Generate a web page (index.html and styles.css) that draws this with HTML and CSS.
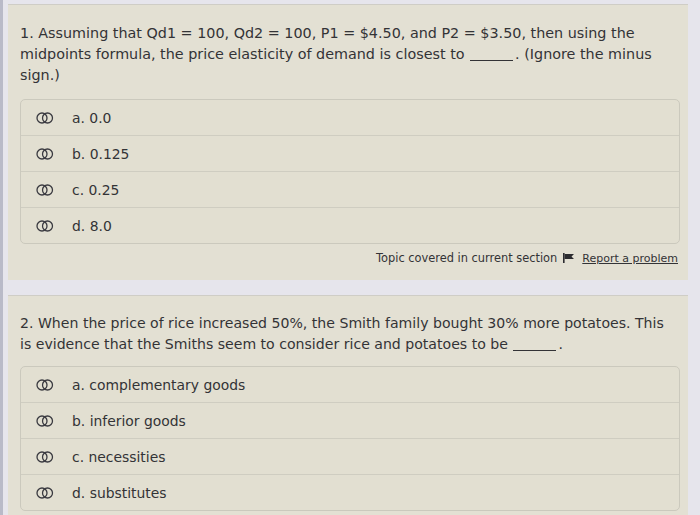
FILE: index.html
```html
<!DOCTYPE html>
<html>
<head>
<meta charset="utf-8">
<link rel="stylesheet" href="styles.css">
</head>
<body>
<div class="page">
  <section class="card card1">
    <p class="question">1. Assuming that Qd1 = 100, Qd2 = 100, P1 = $4.50, and P2 = $3.50, then using the midpoints formula, the price elasticity of demand is closest to <span class="blank"></span>. (Ignore the minus sign.)</p>
    <div class="options">
      <div class="opt"><svg class="radio" viewBox="0 0 18 12"><circle cx="6" cy="6" r="5"/><circle cx="11.5" cy="6" r="5"/></svg><span>a. 0.0</span></div>
      <div class="opt"><svg class="radio" viewBox="0 0 18 12"><circle cx="6" cy="6" r="5"/><circle cx="11.5" cy="6" r="5"/></svg><span>b. 0.125</span></div>
      <div class="opt"><svg class="radio" viewBox="0 0 18 12"><circle cx="6" cy="6" r="5"/><circle cx="11.5" cy="6" r="5"/></svg><span>c. 0.25</span></div>
      <div class="opt"><svg class="radio" viewBox="0 0 18 12"><circle cx="6" cy="6" r="5"/><circle cx="11.5" cy="6" r="5"/></svg><span>d. 8.0</span></div>
    </div>
    <div class="footer">
      <span>Topic covered in current section</span>
      <svg class="flag" viewBox="0 0 12 10"><rect x="0" y="0" width="1.6" height="10"/><path d="M1.6 1 L11 1 L8.5 3.5 L11 6 L1.6 6 Z"/></svg>
      <a class="report">Report a problem</a>
    </div>
  </section>
  <section class="card card2">
    <p class="question">2. When the price of rice increased 50%, the Smith family bought 30% more potatoes. This is evidence that the Smiths seem to consider rice and potatoes to be <span class="blank"></span>.</p>
    <div class="options">
      <div class="opt"><svg class="radio" viewBox="0 0 18 12"><circle cx="6" cy="6" r="5"/><circle cx="11.5" cy="6" r="5"/></svg><span>a. complementary goods</span></div>
      <div class="opt"><svg class="radio" viewBox="0 0 18 12"><circle cx="6" cy="6" r="5"/><circle cx="11.5" cy="6" r="5"/></svg><span>b. inferior goods</span></div>
      <div class="opt"><svg class="radio" viewBox="0 0 18 12"><circle cx="6" cy="6" r="5"/><circle cx="11.5" cy="6" r="5"/></svg><span>c. necessities</span></div>
      <div class="opt"><svg class="radio" viewBox="0 0 18 12"><circle cx="6" cy="6" r="5"/><circle cx="11.5" cy="6" r="5"/></svg><span>d. substitutes</span></div>
    </div>
  </section>
</div>
</body>
</html>
```
FILE: styles.css
```css
html, body {
  margin: 0;
  padding: 0;
}
body {
  background: #e6e5ec;
  font-family: "DejaVu Sans", Verdana, sans-serif;
  color: #333336;
  width: 700px;
  height: 515px;
  overflow: hidden;
  border-left: 3px solid #b9bac8;
  box-sizing: border-box;
}
.page {
  display: flex;
  flex-direction: column;
  gap: 15px;
  padding: 4px 0 0 5px;
  width: 680px;
}
.card {
  background: #e3e0d3;
  border-top: 1px solid #cfcdc6;
  padding: 0 8px 0 12px;
}
.card1 {
  padding-top: 18px;
  padding-bottom: 15px;
}
.card2 {
  padding-top: 17px;
  padding-bottom: 10px;
}
.question {
  margin: 0 0 13px 0;
  font-size: 14.35px;
  line-height: 21px;
  padding-right: 6px;
}
.card2 .question {
  margin-bottom: 11px;
  font-size: 14.1px;
}
.blank {
  display: inline-block;
  width: 43px;
  height: 1px;
  border-bottom: 1px solid #333336;
  vertical-align: -2px;
  margin: 0 2px 0 1px;
}
.options {
  border: 1px solid #cbc9bd;
  border-radius: 5px;
  background: #e2dfd1;
}
.opt {
  display: flex;
  align-items: center;
  height: 35px;
  border-top: 1px solid #cfcdc1;
  font-size: 13.9px;
}
.opt:first-child {
  border-top: none;
}
.radio {
  width: 18px;
  height: 12px;
  margin-left: 15px;
  margin-right: 18px;
  fill: none;
  stroke: #3a3a40;
  stroke-width: 1.3;
}
.footer {
  display: flex;
  justify-content: flex-end;
  align-items: center;
  gap: 4px;
  font-size: 11.4px;
  margin-top: 7px;
  padding-right: 2px;
}
.flag {
  width: 12px;
  height: 10px;
  fill: #2c2c30;
  margin-left: 2px;
  margin-right: 3px;
}
.report {
  text-decoration: underline;
  color: #333336;
  font-size: 11px;
}
```
